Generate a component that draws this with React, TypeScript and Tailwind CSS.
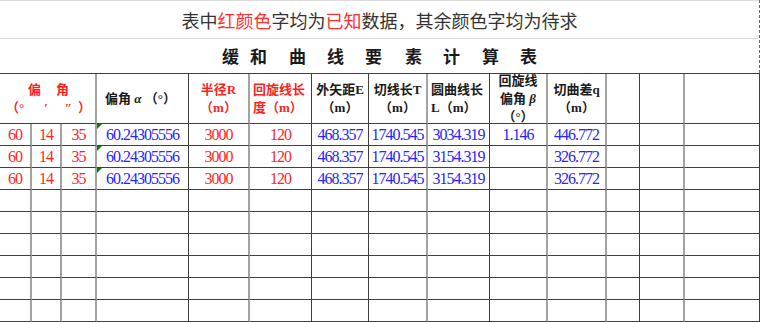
import React from 'react'

const GRAY = 'border-r-2 border-r-[#a3a3a3]'
const DARK = 'border-r border-r-[#3f3f3f]'

// right border of each of the 14 columns
const colBorder = [GRAY, GRAY, GRAY, DARK, GRAY, DARK, DARK, GRAY, DARK, GRAY, GRAY, DARK, GRAY, DARK]
// red = given value, blue = computed
const colColor = [
  'text-[#ff1f1f]', 'text-[#ff1f1f]', 'text-[#ff1f1f]', 'text-[#2525ff]', 'text-[#ff1f1f]', 'text-[#ff1f1f]',
  'text-[#2525ff]', 'text-[#2525ff]', 'text-[#2525ff]', 'text-[#2525ff]', 'text-[#2525ff]', '', '', '',
]

const rows: string[][] = [
  ['60', '14', '35', '60.24305556', '3000', '120', '468.357', '1740.545', '3034.319', '1.146', '446.772', '', '', ''],
  ['60', '14', '35', '60.24305556', '3000', '120', '468.357', '1740.545', '3154.319', '', '326.772', '', '', ''],
  ['60', '14', '35', '60.24305556', '3000', '120', '468.357', '1740.545', '3154.319', '', '326.772', '', '', ''],
  ...Array.from({ length: 6 }, () => Array(14).fill('')),
]

const titleChars = ['缓', '和', '曲', '线', '要', '素', '计', '算', '表']
const titleGaps = ['', 'ml-[11px]', 'ml-[22px]', 'ml-[21px]', 'ml-[21px]', 'ml-[23px]', 'ml-[21px]', 'ml-[22px]', 'ml-[21px]']

function HeadCell({ border, className = '', children }: { border: string; className?: string; children?: React.ReactNode }) {
  return (
    <div className={`h-[50px] border-b border-b-[#3f3f3f] ${border} flex flex-col justify-center text-[13px] font-bold leading-[18px] ${className}`}>
      {children}
    </div>
  )
}

export default function App() {
  return (
    <div className="w-[760px] h-[322px] overflow-hidden bg-white" style={{ fontFamily: '"Liberation Serif", "Noto Sans CJK SC", serif' }}>
      {/* title rows, dotted page-break line on the right */}
      <div className="border-r border-dashed border-r-[#6f6f6f]" style={{ fontFamily: '"Noto Sans CJK SC", sans-serif' }}>
        <div className="h-[39px] border-t border-b border-[#dcdcdc] flex items-center justify-center text-[18px] text-[#333]">
          <span className="mt-[1px]">
            表中<span className="text-[#ff3030]">红颜色</span>字均为<span className="text-[#ff3030]">已知</span>数据，其余颜色字均为待求
          </span>
        </div>
        <div className="h-[34px] flex items-center justify-center text-[17px] font-bold text-[#1a1a1a]">
          {titleChars.map((c, i) => (
            <span key={i} className={titleGaps[i]}>{c}</span>
          ))}
        </div>
      </div>

      {/* table */}
      <div className="grid grid-cols-[32px_30px_35px_92px_61px_62px_57px_59px_62px_58px_59px_33px_45px_75px] border-t border-t-[#3f3f3f]">
        <HeadCell border={GRAY} className="col-span-3 text-[#ff1f1f] text-[13px]">
          <div className="flex pl-[28px]">
            <span>偏</span>
            <span className="ml-[15px]">角</span>
          </div>
          <div className="flex pl-[6px]">
            <span>（°</span>
            <span className="ml-[20px]">′</span>
            <span className="ml-[17px]">″</span>
            <span className="ml-[6px]">）</span>
          </div>
        </HeadCell>
        <HeadCell border={DARK} className="pl-[8px] text-[#1a1a1a]">
          <span>偏角 <span className="italic">α</span> （°）</span>
        </HeadCell>
        <HeadCell border={GRAY} className="items-center text-[#ff1f1f]">
          <span>半径R</span>
          <span>（m）</span>
        </HeadCell>
        <HeadCell border={DARK} className="pl-[3px] text-[#ff1f1f]">
          <span>回旋线长</span>
          <span>度（m）</span>
        </HeadCell>
        <HeadCell border={DARK} className="items-center text-[#1a1a1a]">
          <span>外矢距E</span>
          <span>（m）</span>
        </HeadCell>
        <HeadCell border={GRAY} className="items-center text-[#1a1a1a]">
          <span>切线长T</span>
          <span>（m）</span>
        </HeadCell>
        <HeadCell border={DARK} className="pl-[3px] text-[#1a1a1a]">
          <span>圆曲线长</span>
          <span>L（m）</span>
        </HeadCell>
        <HeadCell border={GRAY} className="items-center text-[#1a1a1a] leading-[17px]">
          <span>回旋线</span>
          <span>偏角 <span className="italic">β</span></span>
          <span>（°）</span>
        </HeadCell>
        <HeadCell border={GRAY} className="items-center text-[#1a1a1a]">
          <span>切曲差q</span>
          <span>（m）</span>
        </HeadCell>
        <HeadCell border={DARK} />
        <HeadCell border={GRAY} />
        <HeadCell border={DARK} />

        {rows.map((row, r) =>
          row.map((v, c) => (
            <div
              key={`${r}-${c}`}
              className={`relative h-[22px] border-b border-b-[#3f3f3f] ${colBorder[c]} ${colColor[c]} flex items-center justify-center text-[16px] tracking-[-1px]`}
            >
              {c === 3 && v && (
                <span className="absolute left-0 top-0 w-0 h-0 border-t-[5px] border-r-[5px] border-t-[#0a7a0a] border-r-transparent" />
              )}
              {v}
            </div>
          ))
        )}
      </div>
    </div>
  )
}
